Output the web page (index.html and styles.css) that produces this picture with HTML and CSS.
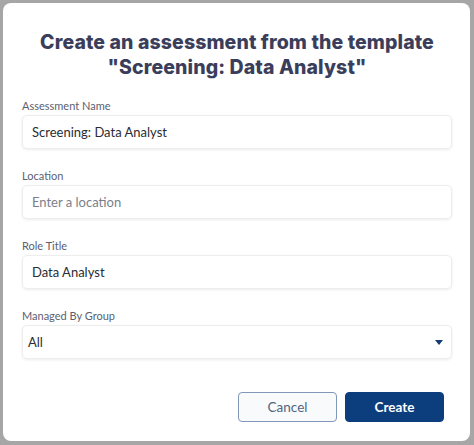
FILE: index.html
```html
<!DOCTYPE html>
<html lang="en">
<head>
<meta charset="utf-8">
<title>Create assessment</title>
<link rel="stylesheet" href="styles.css">
</head>
<body>
<div class="modal">
  <h1 class="title">Create an assessment from the template<br>"Screening: Data Analyst"</h1>
  <div class="field">
    <label class="label">Assessment Name</label>
    <div class="input">Screening: Data Analyst</div>
  </div>
  <div class="field">
    <label class="label">Location</label>
    <div class="input placeholder">Enter a location</div>
  </div>
  <div class="field">
    <label class="label">Role Title</label>
    <div class="input">Data Analyst</div>
  </div>
  <div class="field">
    <label class="label">Managed By Group</label>
    <div class="input select"><span>All</span><span class="caret"></span></div>
  </div>
  <div class="actions">
    <button class="btn btn-cancel">Cancel</button>
    <button class="btn btn-create">Create</button>
  </div>
</div>
</body>
</html>
```
FILE: styles.css
```css
html, body {
  margin: 0;
  padding: 0;
}
body {
  background: #a6a6a6;
  padding: 3px 4px 4px 3px;
  font-family: "Lato", "Open Sans", sans-serif;
}
.modal {
  background: #fff;
  border-radius: 8px;
  height: 438px;
  box-sizing: border-box;
  padding: 27px 18px 0 19px;
  display: flex;
  flex-direction: column;
}
.title {
  margin: 0 0 18px;
  text-align: center;
  font-family: "Inter", "Open Sans", sans-serif;
  font-weight: 800;
  font-size: 19.5px;
  line-height: 25px;
  color: #3b3e5b;
  letter-spacing: 0.1px;
}
.field {
  display: flex;
  flex-direction: column;
  gap: 2px;
  margin-bottom: 19px;
}
.label {
  font-size: 11px;
  line-height: 14px;
  padding-top: 1px;
  color: #5b6070;
}
.input {
  height: 34px;
  box-sizing: border-box;
  border: 1px solid #ededed;
  border-radius: 5px;
  box-shadow: 0 1px 3px rgba(0, 0, 0, 0.08);
  padding: 0 9px;
  display: flex;
  align-items: center;
  font-size: 13px;
  color: #2a2c33;
}
.placeholder {
  color: #7a7f8a;
}
.select {
  padding: 0 8px 0 5px;
  justify-content: space-between;
}
.caret {
  width: 0;
  height: 0;
  border-left: 4px solid transparent;
  border-right: 4px solid transparent;
  border-top: 5px solid #133d73;
}
.actions {
  display: flex;
  justify-content: flex-end;
  gap: 8px;
  margin-top: 14px;
  padding-right: 8px;
}
.btn {
  width: 99px;
  height: 30px;
  border-radius: 4px;
  font-family: "Lato", "Open Sans", sans-serif;
  font-size: 13.5px;
  cursor: pointer;
}
.btn-cancel {
  background: #f9fafc;
  border: 1px solid #7f97b8;
  color: #526582;
}
.btn-create {
  background: #0c3e7e;
  border: 1px solid #0c3e7e;
  color: #fff;
  font-weight: 700;
}
```
